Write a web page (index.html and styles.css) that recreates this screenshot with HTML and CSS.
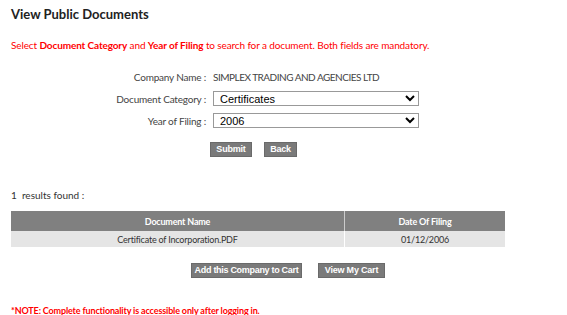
FILE: index.html
```html
<!DOCTYPE html>
<html lang="en">
<head>
  <meta charset="UTF-8" />
  <title>View Public Documents</title>
  <link rel="stylesheet" href="styles.css">
</head>
<body>
  <div class="page">
    <h1 class="title">View Public Documents</h1>
    <p class="hint">Select <b>Document Category</b> and <b>Year of Filing</b> to search for a document. Both fields are mandatory.</p>

    <div class="form">
      <div class="label">Company Name :</div>
      <div class="value">SIMPLEX TRADING AND AGENCIES LTD</div>
      <div class="label">Document Category :</div>
      <select class="field"><option>Certificates</option></select>
      <div class="label">Year of Filing :</div>
      <select class="field"><option>2006</option></select>
    </div>

    <div class="actions">
      <button class="btn btn-submit">Submit</button>
      <button class="btn btn-back">Back</button>
    </div>

    <p class="count">1&nbsp; results found :</p>

    <table class="results">
      <tr>
        <th class="col-name">Document Name</th>
        <th>Date Of Filing</th>
      </tr>
      <tr>
        <td>Certificate of Incorporation.PDF</td>
        <td>01/12/2006</td>
      </tr>
    </table>

    <div class="actions cart">
      <button class="btn btn-add">Add this Company to Cart</button>
      <button class="btn btn-view">View My Cart</button>
    </div>

    <p class="note">*NOTE: Complete functionality is accessible only after logging in.</p>
  </div>
</body>
</html>
```

FILE: styles.css
```css
body {
  margin: 0;
  font-family: 'Lato', sans-serif;
  color: #333;
  background: #fff;
}
.page {
  padding: 5px 11px 0 11px;
}
.title {
  font-size: 13px;
  font-weight: 700;
  color: #222;
  margin: 0;
  line-height: 19px;
}
.hint {
  color: #ff0000;
  font-size: 10px;
  letter-spacing: -0.12px;
  margin: 14px 0 0 0;
  line-height: 14px;
}
.hint b {
  font-weight: 700;
}
.form {
  display: grid;
  grid-template-columns: 195px 206px;
  column-gap: 7px;
  row-gap: 7px;
  align-items: center;
  margin-top: 18px;
  font-size: 10px;
  letter-spacing: -0.2px;
  color: #444;
}
.label {
  text-align: right;
}
.value {
  line-height: 14px;
  letter-spacing: -0.5px;
}
.field {
  font-family: 'Liberation Sans', Arial, sans-serif;
  font-size: 11px;
  height: 15px;
  padding: 0 2px;
  border: 1px solid #999;
  border-radius: 0;
  background: #fff;
  color: #000;
}
.actions {
  display: flex;
  justify-content: flex-start;
  gap: 12px;
  margin: 14px 0 0 199px;
}
.btn {
  font-family: 'Liberation Sans', Arial, sans-serif;
  font-weight: bold;
  font-size: 9px;
  letter-spacing: -0.2px;
  color: #fff;
  background: #7a7a7a;
  border: 1px solid #6a6a6a;
  padding: 0;
  height: 15px;
  line-height: 13px;
  text-align: center;
  white-space: nowrap;
}
.btn-submit {
  width: 42px;
}
.btn-back {
  width: 33px;
}
.btn-add {
  width: 111px;
  letter-spacing: -0.3px;
}
.btn-view {
  width: 67px;
}
.count {
  font-size: 10px;
  margin: 31px 0 0 0;
  line-height: 14px;
}
.results {
  width: 494px;
  border-collapse: collapse;
  margin-top: 9px;
  font-size: 9px;
  letter-spacing: -0.2px;
}
.results th {
  background: #808080;
  color: #fff;
  font-weight: 700;
  height: 20px;
  padding: 0;
  border-left: 1px solid #ccc;
}
.results th:first-child {
  border-left: none;
}
.col-name {
  width: 333px;
}
.results td {
  background: #e5e5e5;
  text-align: center;
  height: 16px;
  padding: 0;
  border-left: 1px solid #fff;
  color: #333;
}
.results td:first-child {
  border-left: none;
}
.cart {
  margin: 16px 0 0 180px;
  gap: 16px;
}
.note {
  color: #ff0000;
  font-weight: 700;
  font-size: 9px;
  letter-spacing: -0.15px;
  margin: 28px 0 0 0;
  line-height: 10px;
}
```
